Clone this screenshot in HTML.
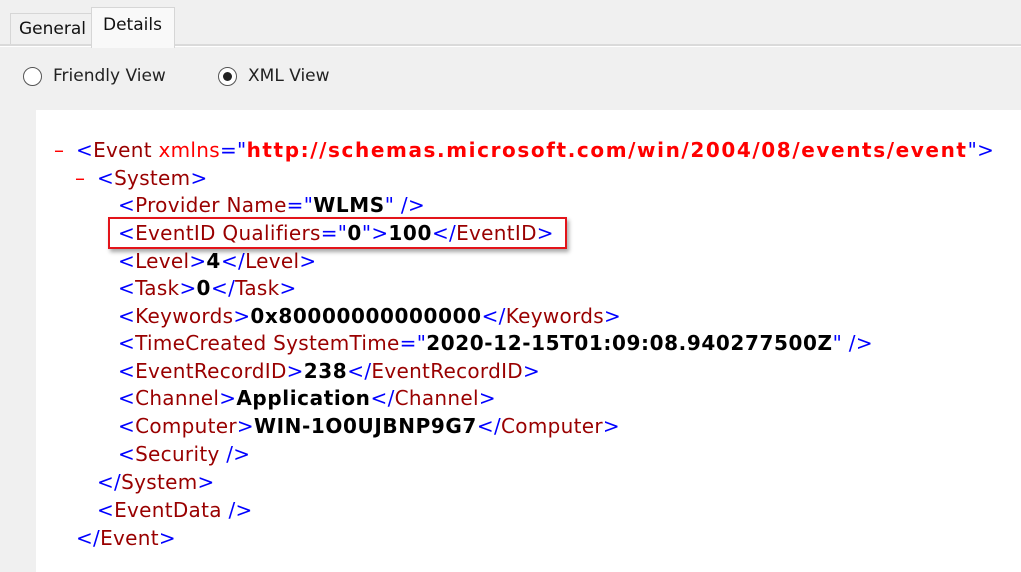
<!DOCTYPE html>
<html><head><style>
body{margin:0;width:1021px;height:572px;background:#f0f0f0;overflow:hidden;position:relative;font-family:"DejaVu Sans","Liberation Sans",sans-serif;}
.tabs{position:absolute;left:0;top:0;width:1021px;height:44px;border-bottom:2px solid #dadada;}
.tabline{position:absolute;left:0;top:46px;width:1021px;height:1px;background:#fff;}
.tab{position:absolute;font-size:17px;color:#111;}
.t1{left:10px;top:13px;width:80px;height:30px;border:1px solid #d6d6d6;border-bottom:none;background:#f0f0f0;}
.t2{left:91px;top:7px;width:82px;height:40px;border:1px solid #d6d6d6;border-bottom:none;background:#f9f9f9;z-index:2}
.radio{position:absolute;top:67px;width:19px;height:19px;border:1px solid #555;border-radius:50%;background:#fff;box-sizing:border-box}
.radio i{position:absolute;left:4px;top:4px;width:9px;height:9px;border-radius:50%;background:#222}
.lbl{position:absolute;top:66px;font-size:17px;color:#222}
.content{position:absolute;left:36px;top:110px;right:0;bottom:0;background:#fff;}
.l{position:absolute;font-size:20px;letter-spacing:0.3px;white-space:pre;line-height:24px;color:#990000;}
.b{color:#0000ff}.v{color:#000;font-weight:bold;letter-spacing:0.6px}.u{color:#ff0000;font-weight:bold;letter-spacing:1.6px}.m{color:#ff0000;position:absolute;font-size:20px;line-height:24px}
.box{position:absolute;left:108px;top:217px;width:455px;height:28px;border:2px solid #e3141a;box-shadow:2px 3px 4px rgba(0,0,0,.35);}
</style></head><body>
<div class="tabs"></div><div class="tabline"></div>
<div class="tab t1"><span style="position:absolute;left:8px;top:5px">General</span></div>
<div class="tab t2"><span style="position:absolute;left:11px;top:7px">Details</span></div>
<div class="radio" style="left:23px"></div><div class="lbl" style="left:53px">Friendly View</div>
<div class="radio" style="left:218px"><i></i></div><div class="lbl" style="left:248px">XML View</div>
<div class="content"></div>
<div class="m" style="left:54px;top:138px">–</div>
<div class="m" style="left:75px;top:166px">–</div>
<div class="l" style="left:76px;top:138px"><span class="b">&lt;</span>Event <span style="color:#ff0000">xmlns</span><span class="b">="</span><span class="u">http://schemas.microsoft.com/win/2004/08/events/event</span><span class="b">"&gt;</span></div>
<div class="l" style="left:97px;top:166px"><span class="b">&lt;</span>System<span class="b">&gt;</span></div>
<div class="l" style="left:118px;top:193px"><span class="b">&lt;</span>Provider Name<span class="b">="</span><span class="v">WLMS</span><span class="b">" /&gt;</span></div>
<div class="l" style="left:118px;top:221px"><span class="b">&lt;</span>EventID Qualifiers<span class="b">="</span><span class="v">0</span><span class="b">"&gt;</span><span class="v">100</span><span class="b">&lt;/</span>EventID<span class="b">&gt;</span></div>
<div class="l" style="left:118px;top:249px"><span class="b">&lt;</span>Level<span class="b">&gt;</span><span class="v">4</span><span class="b">&lt;/</span>Level<span class="b">&gt;</span></div>
<div class="l" style="left:118px;top:276px"><span class="b">&lt;</span>Task<span class="b">&gt;</span><span class="v">0</span><span class="b">&lt;/</span>Task<span class="b">&gt;</span></div>
<div class="l" style="left:118px;top:304px"><span class="b">&lt;</span>Keywords<span class="b">&gt;</span><span class="v">0x80000000000000</span><span class="b">&lt;/</span>Keywords<span class="b">&gt;</span></div>
<div class="l" style="left:118px;top:331px"><span class="b">&lt;</span>TimeCreated SystemTime<span class="b">="</span><span class="v">2020-12-15T01:09:08.940277500Z</span><span class="b">" /&gt;</span></div>
<div class="l" style="left:118px;top:359px"><span class="b">&lt;</span>EventRecordID<span class="b">&gt;</span><span class="v">238</span><span class="b">&lt;/</span>EventRecordID<span class="b">&gt;</span></div>
<div class="l" style="left:118px;top:386px"><span class="b">&lt;</span>Channel<span class="b">&gt;</span><span class="v">Application</span><span class="b">&lt;/</span>Channel<span class="b">&gt;</span></div>
<div class="l" style="left:118px;top:414px"><span class="b">&lt;</span>Computer<span class="b">&gt;</span><span class="v">WIN-1O0UJBNP9G7</span><span class="b">&lt;/</span>Computer<span class="b">&gt;</span></div>
<div class="l" style="left:118px;top:442px"><span class="b">&lt;</span>Security <span class="b">/&gt;</span></div>
<div class="l" style="left:97px;top:470px"><span class="b">&lt;/</span>System<span class="b">&gt;</span></div>
<div class="l" style="left:97px;top:498px"><span class="b">&lt;</span>EventData <span class="b">/&gt;</span></div>
<div class="l" style="left:76px;top:526px"><span class="b">&lt;/</span>Event<span class="b">&gt;</span></div>
<div class="box"></div>
</body></html>
